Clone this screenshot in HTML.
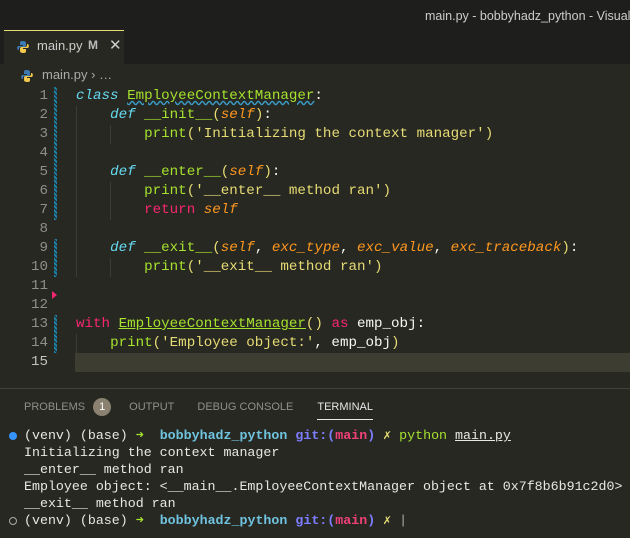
<!DOCTYPE html>
<html><head><meta charset="utf-8"><style>
*{margin:0;padding:0;box-sizing:border-box}
body{width:630px;height:538px;background:#272822;overflow:hidden;position:relative;font-family:"Liberation Sans",sans-serif}
.title{position:absolute;left:0;top:0;width:630px;height:34px;background:#1e1f1c;color:#ccc;font-size:12.5px;overflow:hidden}
.title span{position:absolute;left:425px;top:9px;white-space:nowrap}
.tabs{position:absolute;left:0;top:34px;width:630px;height:30px;background:#1e1f1c}
.tab{position:absolute;left:4px;top:30px;width:120px;height:34px;background:#272822;border-top:1px solid #e6db74;color:#ccc;font-size:13px}
.crumb{position:absolute;left:20px;top:67px;color:#aaa;font-size:13px}
.code{position:absolute;left:0;top:87px;font-family:"Liberation Mono",monospace;font-size:14.2px;color:#f8f8f2;width:630px;height:300px;overflow:hidden}
.l{position:absolute;left:0;height:19px;line-height:19px;white-space:pre;width:630px}
.n{position:absolute;left:0;width:48px;text-align:right;color:#90908a}
.t{position:absolute;left:76px}
.bar{position:absolute;left:54px;width:3px;height:19px;background:repeating-linear-gradient(45deg,#1b81a8 0 2px,#272822 2px 3px)}
.ig{position:absolute;width:1px;background:#3b3c35}
.k{color:#66d9ef;font-style:italic}.c{color:#a6e22e}.s{color:#e6db74}.p{color:#fd971f;font-style:italic}.r{color:#f92672}.y{color:#a6e22e}.b{color:#e6db74}
.panel{position:absolute;left:0;top:388px;width:630px;height:150px;border-top:1px solid #414339;background:#272822}
.ptabs{position:absolute;top:9px;left:24px;font-size:11px;color:#8f908a;white-space:nowrap}
.term{position:absolute;left:0;top:427px;font-family:"Liberation Mono",monospace;font-size:13.3px;color:#e8e8e2;width:630px;height:111px;overflow:hidden}
.tl{position:absolute;left:24px;height:17px;line-height:17px;white-space:pre}
.g{color:#6fc3df;font-weight:bold}.gi{color:#7d7dff;font-weight:bold}.m{color:#f0407a;font-weight:bold}.x{color:#e6db74}.gr{color:#a6e22e}
</style></head><body>
<div class="title"><span>main.py - bobbyhadz_python - Visual Studio Code</span></div>
<div class="tabs"></div>
<div class="tab">
<svg style="position:absolute;left:12px;top:9px" width="14" height="14" viewBox="0 0 14 14"><path d="M7 1C4 1 4 2 4 3v2h3v1H2.5C1 6 1 8 1.5 9.5 2 10 3 10 3 10V8.5C3 7.5 4 7 5 7h3.5C9.5 7 10 6 10 5V3c0-1-1-2-3-2z" fill="#3c7ab2"/><path d="M7 13c3 0 3-1 3-2V9H7V8h4.5C13 8 13 6 12.5 4.5 12 4 11 4 11 4v1.5C11 6.5 10 7 9 7H5.5C4.5 7 4 8 4 9v2c0 1 1 2 3 2z" fill="#f2c94c"/></svg>
<span style="position:absolute;left:33px;top:7px">main.py</span><span style="position:absolute;left:84px;top:7px;color:#bbb;font-weight:bold;font-size:12px">M</span><span style="position:absolute;left:105px;top:5px;font-size:15px">✕</span></div>
<svg style="position:absolute;left:20px;top:69px" width="14" height="14" viewBox="0 0 14 14"><path d="M7 1C4 1 4 2 4 3v2h3v1H2.5C1 6 1 8 1.5 9.5 2 10 3 10 3 10V8.5C3 7.5 4 7 5 7h3.5C9.5 7 10 6 10 5V3c0-1-1-2-3-2z" fill="#3c7ab2"/><path d="M7 13c3 0 3-1 3-2V9H7V8h4.5C13 8 13 6 12.5 4.5 12 4 11 4 11 4v1.5C11 6.5 10 7 9 7H5.5C4.5 7 4 8 4 9v2c0 1 1 2 3 2z" fill="#f2c94c"/></svg>
<div class="crumb" style="left:42px">main.py › …</div>
<div class="code">
<div class="l" style="top:266px;left:75px;width:555px;background:#3e3d32"></div>
<div class="ig" style="left:76px;top:19px;height:171px"></div>
<div class="ig" style="left:110px;top:38px;height:19px"></div>
<div class="ig" style="left:110px;top:95px;height:38px"></div>
<div class="ig" style="left:110px;top:171px;height:19px"></div>
<div class="ig" style="left:76px;top:247px;height:19px"></div>
<div class="bar" style="top:0;height:133px"></div>
<div class="bar" style="top:152px;height:38px"></div>
<div class="bar" style="top:228px;height:38px"></div>
<div style="position:absolute;left:52px;top:204px;width:0;height:0;border-left:5px solid #f92672;border-top:4px solid transparent;border-bottom:4px solid transparent"></div>
<div class="l" style="top:0"><span class="n">1</span><span class="t"><span class="k">class</span> <span class="c" style="text-decoration:underline wavy #3a9cc6">EmployeeContextManager</span>:</span></div>
<div class="l" style="top:19px"><span class="n">2</span><span class="t">    <span class="k">def</span> <span class="c">__init__</span><span class="b">(</span><span class="p">self</span><span class="b">)</span>:</span></div>
<div class="l" style="top:38px"><span class="n">3</span><span class="t">        <span class="y">print</span><span class="b">(</span><span class="s">'Initializing the context manager'</span><span class="b">)</span></span></div>
<div class="l" style="top:57px"><span class="n">4</span></div>
<div class="l" style="top:76px"><span class="n">5</span><span class="t">    <span class="k">def</span> <span class="c">__enter__</span><span class="b">(</span><span class="p">self</span><span class="b">)</span>:</span></div>
<div class="l" style="top:95px"><span class="n">6</span><span class="t">        <span class="y">print</span><span class="b">(</span><span class="s">'__enter__ method ran'</span><span class="b">)</span></span></div>
<div class="l" style="top:114px"><span class="n">7</span><span class="t">        <span class="r">return</span> <span class="p">self</span></span></div>
<div class="l" style="top:133px"><span class="n">8</span></div>
<div class="l" style="top:152px"><span class="n">9</span><span class="t">    <span class="k">def</span> <span class="c">__exit__</span><span class="b">(</span><span class="p">self</span>, <span class="p">exc_type</span>, <span class="p">exc_value</span>, <span class="p">exc_traceback</span><span class="b">)</span>:</span></div>
<div class="l" style="top:171px"><span class="n">10</span><span class="t">        <span class="y">print</span><span class="b">(</span><span class="s">'__exit__ method ran'</span><span class="b">)</span></span></div>
<div class="l" style="top:190px"><span class="n">11</span></div>
<div class="l" style="top:209px"><span class="n">12</span></div>
<div class="l" style="top:228px"><span class="n">13</span><span class="t"><span class="r">with</span> <span class="c" style="text-decoration:underline">EmployeeContextManager</span><span class="b">()</span> <span class="r">as</span> emp_obj:</span></div>
<div class="l" style="top:247px"><span class="n">14</span><span class="t">    <span class="y">print</span><span class="b">(</span><span class="s">'Employee object:'</span>, emp_obj<span class="b">)</span></span></div>
<div class="l" style="top:266px"><span class="n" style="color:#c2c2bf">15</span></div>
</div>
<div class="panel"><div class="ptabs"><span>PROBLEMS</span><span style="display:inline-block;margin-left:8px;width:18px;height:18px;border-radius:9px;background:#8a8170;color:#fff;text-align:center;line-height:18px">1</span><span style="margin-left:18px">OUTPUT</span><span style="margin-left:23px">DEBUG CONSOLE</span><span style="margin-left:24px;color:#e7e7e7;border-bottom:1px solid #e7e7e7;padding-bottom:6px">TERMINAL</span></div></div>
<div class="term">
<div style="position:absolute;left:9px;top:5px;width:8px;height:8px;border-radius:4px;background:#3794ff"></div>
<div style="position:absolute;left:9px;top:90px;width:8px;height:8px;border-radius:4px;border:1px solid #aaa"></div>
<div class="tl" style="top:0">(venv) (base) <span class="gr">➜</span>  <span class="g">bobbyhadz_python</span> <span class="gi">git:(</span><span class="m">main</span><span class="gi">)</span> <span class="x">✗</span> <span class="gr">python</span> <span style="text-decoration:underline">main.py</span></div>
<div class="tl" style="top:17px">Initializing the context manager</div>
<div class="tl" style="top:34px">__enter__ method ran</div>
<div class="tl" style="top:51px">Employee object: &lt;__main__.EmployeeContextManager object at 0x7f8b6b91c2d0&gt;</div>
<div class="tl" style="top:68px">__exit__ method ran</div>
<div class="tl" style="top:85px">(venv) (base) <span class="gr">➜</span>  <span class="g">bobbyhadz_python</span> <span class="gi">git:(</span><span class="m">main</span><span class="gi">)</span> <span class="x">✗</span> <span style="color:#aaa">|</span></div>
</div>
</body></html>
